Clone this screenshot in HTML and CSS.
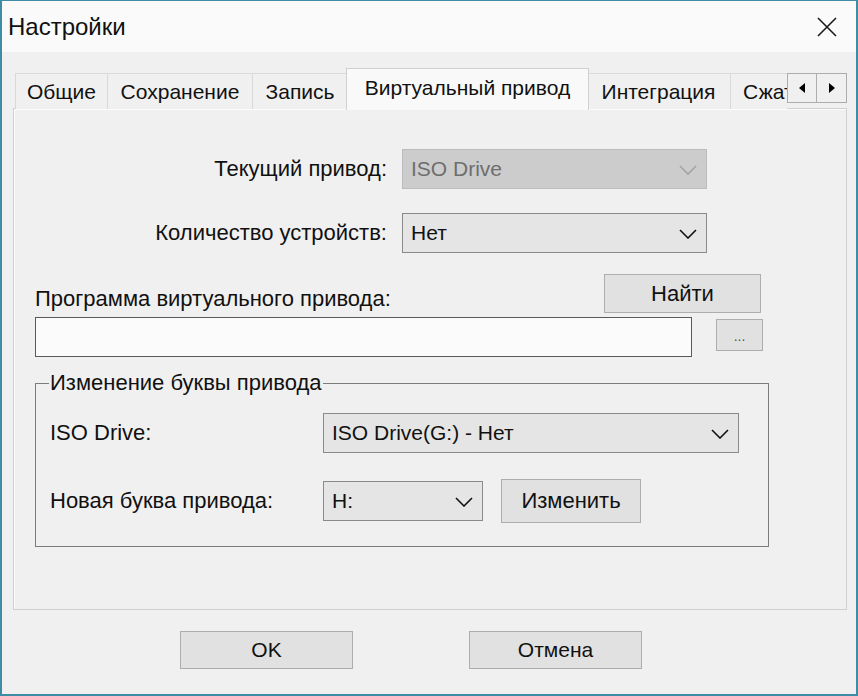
FILE: index.html
```html
<!DOCTYPE html>
<html lang="ru">
    <head>
        <meta charset="UTF-8" />
        <meta name="viewport" content="width=device-width, initial-scale=1.0" />
        <title>Настройки</title>
        <link rel="stylesheet" href="styles.css">
    </head>
    <body>
        <!-- 대화상자 창 -->
        <div class="win">
            <!-- 제목줄 -->
            <div class="titlebar">
                <span class="ttl">Настройки</span>
                <svg class="close" width="20" height="20" viewBox="0 0 20 20">
                    <path d="M1 1L19 19M19 1L1 19" stroke="#1a1a1a" stroke-width="1.6" fill="none" />
                </svg>
            </div>

            <div class="body">
                <!-- 탭줄 -->
                <div class="tabbar">
                    <div class="tabs">
                        <div class="tab">Общие</div>
                        <div class="tab">Сохранение</div>
                        <div class="tab">Запись</div>
                        <div class="tab on">Виртуальный привод</div>
                        <div class="tab">Интеграция</div>
                        <div class="tab">Сжатие</div>
                    </div>
                    <div class="arrows">
                        <span class="arr">
                            <svg width="6" height="10" viewBox="0 0 6 10"><path d="M6 0V10L0 5Z" fill="#000" /></svg>
                        </span>
                        <span class="arr">
                            <svg width="6" height="10" viewBox="0 0 6 10"><path d="M0 0V10L6 5Z" fill="#000" /></svg>
                        </span>
                    </div>
                </div>

                <!-- 탭 내용 -->
                <div class="panel">
                    <div class="drvgrid">
                        <span class="lbl">Текущий привод:</span>
                        <div class="combo dis">
                            ISO Drive
                            <svg class="chev" width="18" height="10" viewBox="0 0 18 10"><path d="M1 1L9 9L17 1" /></svg>
                        </div>
                        <span class="lbl">Количество устройств:</span>
                        <div class="combo">
                            Нет
                            <svg class="chev" width="18" height="10" viewBox="0 0 18 10"><path d="M1 1L9 9L17 1" /></svg>
                        </div>
                    </div>

                    <div class="progrow">
                        <span class="plbl">Программа виртуального привода:</span>
                        <span class="btn find">Найти</span>
                    </div>
                    <div class="pathrow">
                        <div class="inp"></div>
                        <span class="btn dots">...</span>
                    </div>

                    <!-- 드라이브 문자 변경 그룹 -->
                    <fieldset class="grp">
                        <legend>Изменение буквы привода</legend>
                        <div class="grpgrid">
                            <span>ISO Drive:</span>
                            <div class="combo wide">
                                ISO Drive(G:) - Нет
                                <svg class="chev" width="18" height="10" viewBox="0 0 18 10"><path d="M1 1L9 9L17 1" /></svg>
                            </div>
                            <span>Новая буква привода:</span>
                            <div class="letrow">
                                <div class="combo small">
                                    H:
                                    <svg class="chev" width="18" height="10" viewBox="0 0 18 10"><path d="M1 1L9 9L17 1" /></svg>
                                </div>
                                <span class="btn chg">Изменить</span>
                            </div>
                        </div>
                    </fieldset>
                </div>

                <!-- 하단 버튼 -->
                <div class="foot">
                    <span class="btn big">OK</span>
                    <span class="btn big">Отмена</span>
                </div>
            </div>
        </div>
    </body>
</html>
```

FILE: styles.css
```css
/* 공통 */
:root {
    --bg: #f0f0f0;
    --btn: #e1e1e1;
    --line: #adadad;
}

body {
    margin: 0;
    font-family: "Liberation Sans", Arial, sans-serif;
    font-size: 22px;
    color: #111;
}

/* 창 */
.win {
    width: 858px;
    height: 696px;
    box-sizing: border-box;
    border: 2px solid #3f8ca6;
    border-top-width: 1px;
    background-color: var(--bg);
    display: flex;
    flex-direction: column;
}

/* 제목줄 */
.titlebar {
    height: 51px;
    flex-shrink: 0;
    display: flex;
    align-items: center;
    justify-content: space-between;
    padding: 0 19px 0 6px;
    background-color: #fafafa;
}
.ttl {
    font-size: 24px;
    color: #111;
}

.body {
    flex: 1;
    padding: 16px 9px 0 11px;
}

/* 탭줄 */
.tabbar {
    display: flex;
    align-items: flex-end;
    height: 41px;
}
.tabs {
    flex: 1;
    display: flex;
    align-items: flex-end;
    overflow: hidden;
    height: 42px;
    margin-left: 2px;
    margin-bottom: -1px;
    font-size: 21px;
}
.tab {
    flex-shrink: 0;
    height: 36px;
    box-sizing: border-box;
    margin-bottom: 1px;
    margin-left: -1px;
    border: 1px solid #d9d9d9;
    border-bottom: none;
    background-color: var(--bg);
    line-height: 36px;
    text-align: center;
    white-space: nowrap;
}
/* 탭 너비 */
.tab:nth-child(1) { width: 93px; margin-left: 0; }
.tab:nth-child(2) { width: 146px; }
.tab:nth-child(3) { width: 96px; }
.tab:nth-child(5) { width: 145px; }
.tab:nth-child(6) { width: 100px; text-align: left; padding-left: 12px; }

/* 선택된 탭 */
.tab.on {
    position: relative;
    z-index: 1;
    width: 243px;
    height: 42px;
    margin: 0 -2px 0 -2px;
    line-height: 38px;
    background-color: #f9f9f9;
    border-color: #d0d0d0;
}
.arrows {
    display: flex;
    margin-bottom: 6px;
}
.arr {
    width: 30px;
    height: 30px;
    box-sizing: border-box;
    border: 1px solid var(--line);
    background-color: var(--bg);
    display: flex;
    align-items: center;
    justify-content: center;
}
.arr + .arr {
    border-left: none;
}

/* 탭 내용 */
.panel {
    height: 502px;
    box-sizing: border-box;
    margin-top: -1px;
    border: 1px solid #d0d0d0;
    box-shadow: inset 1px 1px 0 #fbfbfb;
}

.drvgrid {
    display: grid;
    grid-template-columns: 373px 305px;
    column-gap: 15px;
    row-gap: 24px;
    margin-top: 40px;
}
.lbl {
    text-align: right;
    align-self: center;
}

/* 콤보박스 */
.combo {
    position: relative;
    height: 40px;
    box-sizing: border-box;
    padding-left: 8px;
    border: 1px solid #8a8a8a;
    background-color: #e5e5e5;
    font-size: 21px;
    line-height: 38px;
    white-space: nowrap;
}
.combo.dis {
    color: #6e6e6e;
    background-color: #cccccc;
    border-color: #bcbcbc;
}
.chev {
    position: absolute;
    right: 9px;
    top: 15px;
}
.chev path {
    fill: none;
    stroke: #111;
    stroke-width: 1.6;
}
.dis .chev path {
    stroke: #a3a3a3;
}
.combo.wide {
    width: 416px;
}
.combo.small {
    width: 160px;
}

/* 버튼 */
.btn {
    display: flex;
    align-items: center;
    justify-content: center;
    box-sizing: border-box;
    border: 1px solid var(--line);
    background-color: var(--btn);
}

.progrow {
    display: flex;
    margin-top: 21px;
    padding: 0 85px 0 21px;
}
.plbl {
    margin-top: 12px;
}
.find {
    margin-left: auto;
    width: 157px;
    height: 39px;
}

.pathrow {
    display: flex;
    align-items: flex-start;
    margin-top: 4px;
    padding-left: 21px;
}
.inp {
    width: 657px;
    height: 40px;
    box-sizing: border-box;
    border: 1px solid #5a5a5a;
    background-color: #fbfbfb;
}
.dots {
    width: 47px;
    height: 32px;
    margin: 2px 0 0 24px;
    align-items: flex-end;
    padding-bottom: 6px;
    font-size: 14px;
    color: #555;
}

/* 그룹박스 */
.grp {
    width: 734px;
    box-sizing: border-box;
    margin: 14px 0 0 21px;
    padding: 18px 13px 23px 13px;
    border: 1px solid #7c7c7c;
}
.grp legend {
    padding: 0 1px;
    line-height: 24px;
}
.grpgrid {
    display: grid;
    grid-template-columns: 274px auto;
    row-gap: 26px;
    align-items: center;
}
.grpgrid > span {
    padding-left: 1px;
}
.letrow {
    display: flex;
    align-items: center;
}
.chg {
    width: 140px;
    height: 44px;
    margin-left: 18px;
}

/* 하단 */
.foot {
    display: flex;
    gap: 116px;
    margin-top: 21px;
    padding-left: 167px;
}
.big {
    width: 173px;
    height: 38px;
    font-size: 21px;
}
```
